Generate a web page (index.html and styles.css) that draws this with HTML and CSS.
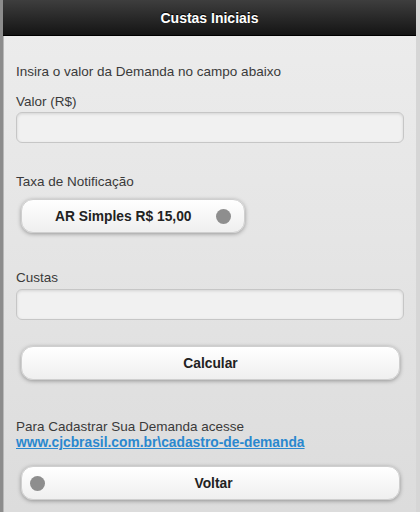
FILE: index.html
```html
<!DOCTYPE html>
<html>
<head>
<meta charset="utf-8">
<link rel="stylesheet" href="styles.css">
</head>
<body>
<div class="page">
  <header class="header"><h1 class="title">Custas Iniciais</h1></header>
  <main class="content">
    <p class="text intro">Insira o valor da Demanda no campo abaixo</p>
    <label class="text label label-valor">Valor (R$)</label>
    <div class="input"></div>
    <label class="text label label-taxa">Taxa de Notificação</label>
    <div class="btn btn-flip"><span class="btn-text">AR Simples R$ 15,00</span><span class="dot"></span></div>
    <label class="text label label-custas">Custas</label>
    <div class="input"></div>
    <div class="btn btn-wide btn-calc"><span class="btn-text">Calcular</span></div>
    <p class="text para">Para Cadastrar Sua Demanda acesse</p>
    <a class="link" href="#">www.cjcbrasil.com.br\cadastro-de-demanda</a>
    <div class="btn btn-wide btn-voltar"><span class="dot dot-left"></span><span class="btn-text">Voltar</span></div>
  </main>
</div>
</body>
</html>
```
FILE: styles.css
```css
html, body {
  margin: 0;
  padding: 0;
  height: 512px;
  overflow: hidden;
}
body {
  font-family: "Liberation Sans", Arial, sans-serif;
  background: #dedede;
}
.page {
  box-sizing: border-box;
  width: 420px;
  height: 512px;
  border-left: 3px solid #8c8c8c;
  box-shadow: inset 1px 0 0 #b8b8b8;
  border-right: 4px solid #d6d6d6;
  display: flex;
  flex-direction: column;
  background: linear-gradient(#ededed, #dcdcdc);
}
.header {
  height: 36px;
  flex: none;
  display: flex;
  align-items: center;
  justify-content: center;
  background: linear-gradient(#3e3e3e, #141414);
  border-bottom: 1px solid #000;
  box-sizing: border-box;
}
.title {
  margin: 0;
  font-size: 14px;
  font-weight: bold;
  color: #fff;
  text-shadow: 0 -1px 1px #000;
  padding-top: 1px;
}
.content {
  display: flex;
  flex-direction: column;
  align-items: flex-start;
  padding: 0 12px 0 13px;
}
.text {
  margin: 0;
  font-size: 13.5px;
  line-height: 16px;
  color: #3a3a3a;
}
.intro { margin-top: 28px; }
.label-valor { margin-top: 14px; }
.label-taxa { margin-top: 31px; }
.label-custas { margin-top: 37px; }
.input {
  box-sizing: border-box;
  align-self: stretch;
  height: 31px;
  margin-top: 2px;
  border: 1px solid #c6c6c6;
  border-radius: 6px;
  background: #f1f1f1;
  box-shadow: inset 0 1px 3px rgba(0,0,0,0.12);
}
.label-custas + .input { margin-top: 3px; }
.btn {
  box-sizing: border-box;
  height: 34px;
  border: 1px solid #cfcfcf;
  border-radius: 12px;
  background: linear-gradient(#ffffff, #efefef);
  box-shadow: 0 1px 4px rgba(0,0,0,0.35);
  display: flex;
  align-items: center;
  position: relative;
  margin-left: 5px;
}
.btn-text {
  font-size: 13.8px;
  font-weight: bold;
  color: #222;
}
.btn-flip {
  width: 224px;
  margin-top: 9px;
  padding-left: 33px;
}
.btn-flip .dot {
  margin-left: 24px;
}
.btn-wide {
  align-self: stretch;
  margin-right: 4px;
  justify-content: center;
}
.btn-calc { margin-top: 26px; }
.btn-voltar { margin-top: 15px; }
.dot {
  width: 15px;
  height: 15px;
  border-radius: 50%;
  background: #8e8e8e;
  display: block;
}
.dot-left {
  position: absolute;
  left: 8px;
  top: 9px;
}
.btn-voltar .btn-text { margin-left: 6px; }
.para { margin-top: 39px; }
.link {
  font-size: 13.8px;
  line-height: 16px;
  font-weight: bold;
  color: #2a88cf;
  text-decoration: underline;
}
```
